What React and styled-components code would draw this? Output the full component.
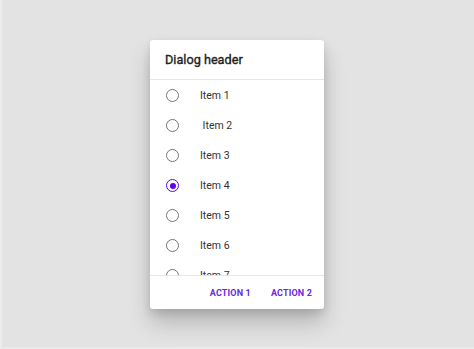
import React, { useState } from "react";
import styled, { createGlobalStyle } from "styled-components";

const Global = createGlobalStyle`
  html, body { margin: 0; padding: 0; }
  body {
    background: #e4e4e4;
    font-family: Roboto, "Noto Sans", sans-serif;
  }
`;

const Page = styled.div`
  width: 474px;
  height: 349px;
  box-sizing: border-box;
  display: flex;
  align-items: center;
  justify-content: center;
  background: #e3e3e3;
  border-left: 2px solid #ececec;
  border-bottom: 2px solid #eaeaea;
`;

const Dialog = styled.div`
  width: 174px;
  height: 269px;
  background: #fff;
  border-radius: 3px;
  box-shadow: 0 14px 22px rgba(0, 0, 0, 0.2), 0 4px 8px rgba(0, 0, 0, 0.12);
  display: flex;
  flex-direction: column;
  overflow: hidden;
  margin-left: -2px;
  margin-top: 1px;
`;

const Header = styled.div`
  height: 38px;
  flex: none;
  display: flex;
  align-items: center;
  padding: 1px 15px 0;
  border-bottom: 1px solid #e6e6e6;
  font-family: Roboto, sans-serif;
  font-size: 12.7px;
  font-weight: 400;
  -webkit-text-stroke: 0.35px #222;
  color: #222;
  box-sizing: content-box;
`;

const List = styled.div`
  flex: 1;
  overflow: hidden;
  display: flex;
  flex-direction: column;
  padding-top: 1px;
`;

const Row = styled.label`
  height: 30px;
  flex: none;
  display: flex;
  align-items: center;
  padding-left: 16px;
  cursor: pointer;
`;

const Radio = styled.span`
  width: 13px;
  height: 13px;
  box-sizing: border-box;
  border-radius: 50%;
  border: 1.7px solid ${(p) => (p.$on ? "#6200ee" : "#757575")};
  display: flex;
  align-items: center;
  justify-content: center;
  flex: none;
  &::after {
    content: "";
    width: 6px;
    height: 6px;
    border-radius: 50%;
    background: ${(p) => (p.$on ? "#6200ee" : "transparent")};
  }
`;

const ItemText = styled.span`
  margin-left: 21px;
  font-size: 10.5px;
  color: #333;
  white-space: pre;
`;

const Footer = styled.div`
  height: 32px;
  flex: none;
  border-top: 1px solid #e6e6e6;
  display: flex;
  align-items: center;
  justify-content: flex-end;
  gap: 20px;
  padding: 1px 12px 0 0;
`;

const Action = styled.button`
  border: none;
  background: none;
  padding: 0;
  font-family: Roboto, sans-serif;
  font-size: 9px;
  font-weight: 700;
  letter-spacing: 0.15px;
  color: #6a28e0;
  cursor: pointer;
`;

const items = ["Item 1", " Item 2", "Item 3", "Item 4", "Item 5", "Item 6", "Item 7"];

export default function App() {
  const [sel, setSel] = useState(3);
  return (
    <>
      <Global />
      <Page>
        <Dialog>
          <Header>Dialog header</Header>
          <List>
            {items.map((t, i) => (
              <Row key={i} onClick={() => setSel(i)}>
                <Radio $on={sel === i} />
                <ItemText>{t}</ItemText>
              </Row>
            ))}
          </List>
          <Footer>
            <Action>ACTION 1</Action>
            <Action>ACTION 2</Action>
          </Footer>
        </Dialog>
      </Page>
    </>
  );
}
